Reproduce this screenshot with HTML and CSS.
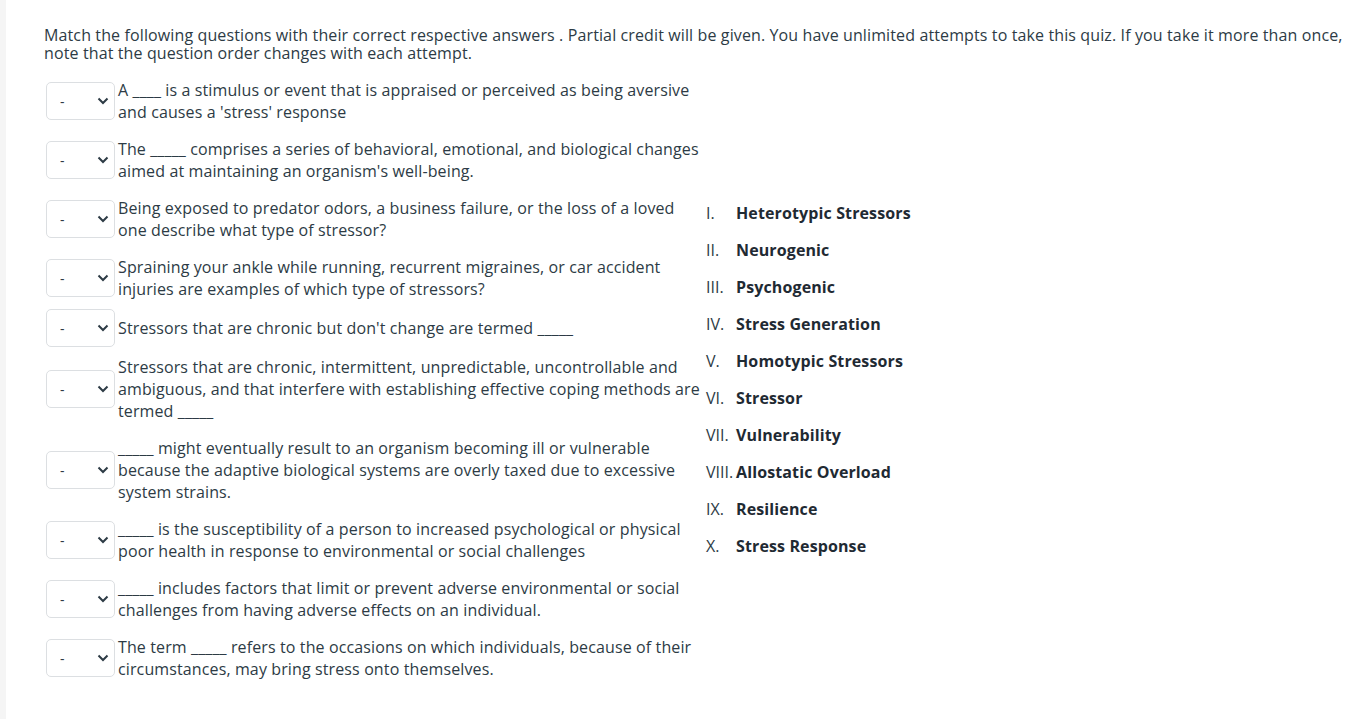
FILE: index.html
```html
<!DOCTYPE html>
<html lang="en">
<head>
<meta charset="utf-8">
<title>Matching quiz</title>
<link rel="stylesheet" href="styles.css">
</head>
<body>
<main class="quiz">
  <p class="intro">Match the following questions with their correct respective answers . Partial credit will be given. You have unlimited attempts to take this quiz. If you take it more than once, note that the question order changes with each attempt.</p>
  <div class="match">
    <div class="questions">
      <div class="row"><div class="sel"><select><option>-</option></select><svg class="chev" viewBox="0 0 12 8" width="12" height="8"><path d="M1.5 1.5 L6 6 L10.5 1.5" fill="none" stroke="#2d3b45" stroke-width="2"/></svg></div><div class="q">A ____ is a stimulus or event that is appraised or perceived as being aversive and causes a 'stress' response</div></div>
      <div class="row"><div class="sel"><select><option>-</option></select><svg class="chev" viewBox="0 0 12 8" width="12" height="8"><path d="M1.5 1.5 L6 6 L10.5 1.5" fill="none" stroke="#2d3b45" stroke-width="2"/></svg></div><div class="q">The _____ comprises a series of behavioral, emotional, and biological changes aimed at maintaining an organism's well-being.</div></div>
      <div class="row"><div class="sel"><select><option>-</option></select><svg class="chev" viewBox="0 0 12 8" width="12" height="8"><path d="M1.5 1.5 L6 6 L10.5 1.5" fill="none" stroke="#2d3b45" stroke-width="2"/></svg></div><div class="q">Being exposed to predator odors, a business failure, or the loss of a loved one describe what type of stressor?</div></div>
      <div class="row"><div class="sel"><select><option>-</option></select><svg class="chev" viewBox="0 0 12 8" width="12" height="8"><path d="M1.5 1.5 L6 6 L10.5 1.5" fill="none" stroke="#2d3b45" stroke-width="2"/></svg></div><div class="q">Spraining your ankle while running, recurrent migraines, or car accident injuries are examples of which type of stressors?</div></div>
      <div class="row"><div class="sel"><select><option>-</option></select><svg class="chev" viewBox="0 0 12 8" width="12" height="8"><path d="M1.5 1.5 L6 6 L10.5 1.5" fill="none" stroke="#2d3b45" stroke-width="2"/></svg></div><div class="q">Stressors that are chronic but don't change are termed _____</div></div>
      <div class="row"><div class="sel"><select><option>-</option></select><svg class="chev" viewBox="0 0 12 8" width="12" height="8"><path d="M1.5 1.5 L6 6 L10.5 1.5" fill="none" stroke="#2d3b45" stroke-width="2"/></svg></div><div class="q">Stressors that are chronic, intermittent, unpredictable, uncontrollable and ambiguous, and that interfere with establishing effective coping methods are termed _____</div></div>
      <div class="row"><div class="sel"><select><option>-</option></select><svg class="chev" viewBox="0 0 12 8" width="12" height="8"><path d="M1.5 1.5 L6 6 L10.5 1.5" fill="none" stroke="#2d3b45" stroke-width="2"/></svg></div><div class="q">_____ might eventually result to an organism becoming ill or vulnerable because the adaptive biological systems are overly taxed due to excessive system strains.</div></div>
      <div class="row"><div class="sel"><select><option>-</option></select><svg class="chev" viewBox="0 0 12 8" width="12" height="8"><path d="M1.5 1.5 L6 6 L10.5 1.5" fill="none" stroke="#2d3b45" stroke-width="2"/></svg></div><div class="q">_____ is the susceptibility of a person to increased psychological or physical poor health in response to environmental or social challenges</div></div>
      <div class="row"><div class="sel"><select><option>-</option></select><svg class="chev" viewBox="0 0 12 8" width="12" height="8"><path d="M1.5 1.5 L6 6 L10.5 1.5" fill="none" stroke="#2d3b45" stroke-width="2"/></svg></div><div class="q">_____ includes factors that limit or prevent adverse environmental or social challenges from having adverse effects on an individual.</div></div>
      <div class="row"><div class="sel"><select><option>-</option></select><svg class="chev" viewBox="0 0 12 8" width="12" height="8"><path d="M1.5 1.5 L6 6 L10.5 1.5" fill="none" stroke="#2d3b45" stroke-width="2"/></svg></div><div class="q">The term _____ refers to the occasions on which individuals, because of their circumstances, may bring stress onto themselves.</div></div>
    </div>
    <ol class="answers">
      <li><span class="num">I.</span><span class="term">Heterotypic Stressors</span></li>
      <li><span class="num">II.</span><span class="term">Neurogenic</span></li>
      <li><span class="num">III.</span><span class="term">Psychogenic</span></li>
      <li><span class="num">IV.</span><span class="term">Stress Generation</span></li>
      <li><span class="num">V.</span><span class="term">Homotypic Stressors</span></li>
      <li><span class="num">VI.</span><span class="term">Stressor</span></li>
      <li><span class="num">VII.</span><span class="term">Vulnerability</span></li>
      <li><span class="num">VIII.</span><span class="term">Allostatic Overload</span></li>
      <li><span class="num">IX.</span><span class="term">Resilience</span></li>
      <li><span class="num">X.</span><span class="term">Stress Response</span></li>
    </ol>
  </div>
</main>
</body>
</html>
```

FILE: styles.css
```css
html, body {
  margin: 0;
  padding: 0;
  background: #ffffff;
}
body {
  border-left: 6px solid #f5f5f5;
  min-height: 719px;
  box-sizing: border-box;
  font-family: "Open Sans", "Liberation Sans", sans-serif;
  font-size: 16px;
  letter-spacing: 0.12px;
  color: #2d3b45;
}
.quiz {
  padding: 26px 20px 0 38px;
}
.intro {
  margin: 0;
  line-height: 18.3px;
}
.match {
  display: flex;
  align-items: center;
  margin-top: 9px;
}
.questions {
  display: flex;
  flex-direction: column;
}
.row {
  display: flex;
  align-items: center;
}
.sel {
  position: relative;
  margin: 1.5px 3px 1.5px 2px;
  flex: none;
}
.sel select {
  appearance: none;
  -webkit-appearance: none;
  width: 69px;
  height: 38px;
  box-sizing: border-box;
  border: 1px solid #dcdfe2;
  border-radius: 5px;
  background: #fff;
  font-family: inherit;
  font-size: 14px;
  color: #2d3b45;
  padding: 0 0 0 13px;
}
.chev {
  position: absolute;
  right: 6px;
  top: 15px;
  pointer-events: none;
}
.q {
  width: 585px;
  line-height: 22px;
  padding: 7.5px 0;
}
.answers {
  list-style: none;
  margin: 0 0 0 3px;
  padding: 0;
  display: flex;
  flex-direction: column;
  gap: 15px;
}
.answers li {
  display: flex;
  line-height: 22px;
}
.num {
  width: 30px;
  flex: none;
  white-space: nowrap;
  letter-spacing: 0;
}
.term {
  font-weight: 700;
  color: #1f2a33;
}
```
